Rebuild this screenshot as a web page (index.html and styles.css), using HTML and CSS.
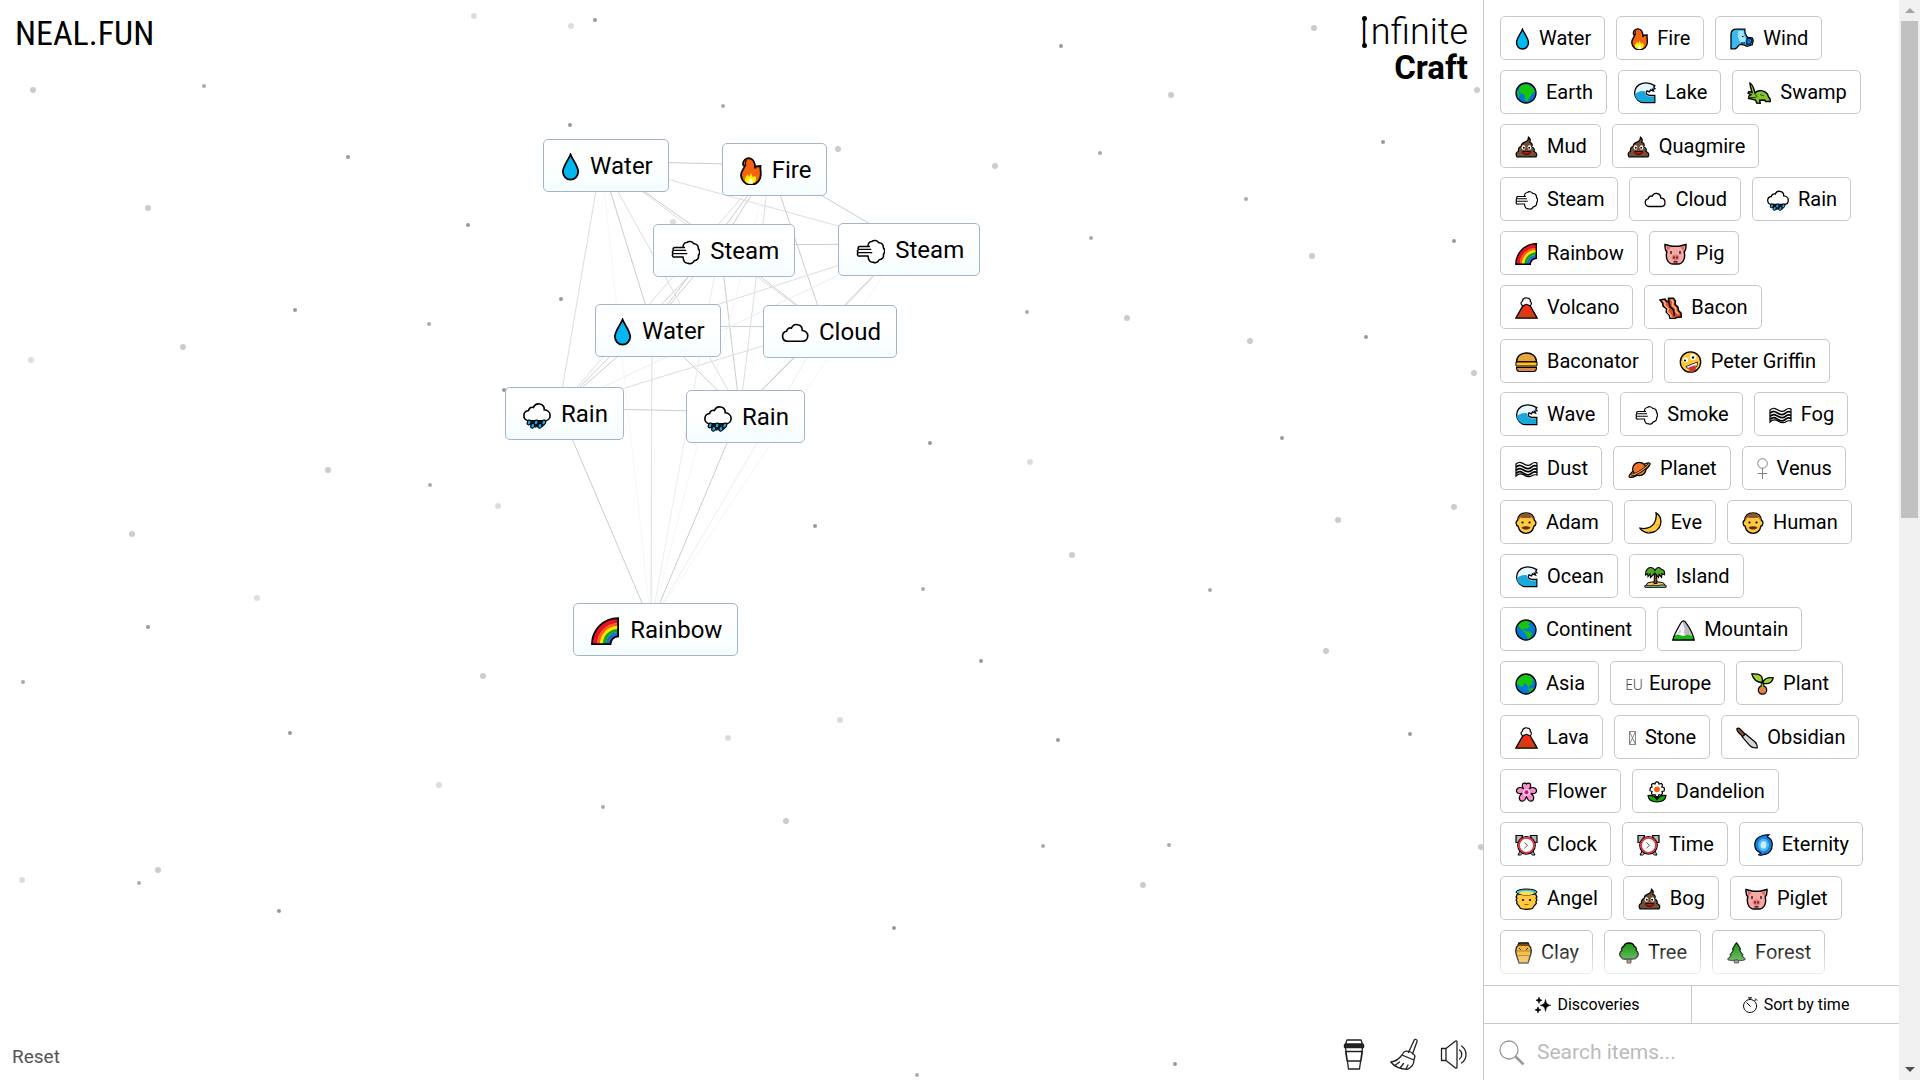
FILE: index.html
```html
<!DOCTYPE html>
<html lang="en">

<head>
    <meta charset="UTF-8">
    <meta name="viewport" content="width=device-width, initial-scale=1.0">
    <title>Infinite Craft</title>
    <link rel="stylesheet" href="styles.css">
</head>

<body>

    <!-- item icons, all 22 units high -->
    <svg class="sprite" aria-hidden="true">
        <defs>
            <g id="water">
                <path d="M7.500 1.200C6.500 4.500 1.500 10 1.500 14.800a6 6.200 0 0 0 12 0C13.500 10 8.500 4.500 7.500 1.200z" fill="#00b7f0" stroke="#000" stroke-width="1.4" />
            </g>
            <g id="fire">
                <path d="M7 .9c3.400.4 5 4 4.800 8l.9-1.600 3.400-.2c-.3 2 .4 4 .2 6.700a7.600 7.600 0 0 1-15.500.6C.6 11.200 3 9.500 3.900 6.800c-1 .4-1.600-.3-1.500-1.800.1-2 2-3.900 4.600-4.100z" fill="#f7630c" stroke="#000" stroke-width="1.4" />
                <path d="M5 2.500c-.9 1.300-.9 2.700-.6 4.200" fill="none" stroke="#000" />
                <path d="M4.500 19.800c-1.600-2.500.3-4.500 1.500-6l1.200 1.800 1.500-3 1.300 3.400 2-1.200c1.200 2 .8 4-.6 5.300-2 1.500-5.200 1.400-6.900-.3z" fill="#fff100" />
                <path d="M7 20.800c-.8-1.800.3-3.200 1.500-4 .8 1 2.200 2 1.500 4z" fill="#fff" />
            </g>
            <g id="wind">
                <path d="M1 20.800V6.500C1 3 3.500 1.200 6.500 1.200h8.300c-.3 2.400.2 4.500 2 7.300l1.200 1 4.200.3 1 2.500-.9 4.500-5.300 1.500-2.500-1.200-4-.7c-2 0-2.500 3.500-5.500 4.400z" fill="#3db8f0" stroke="#000" stroke-width="1.300" />
                <path d="M8 3h5.500l.5 4.500 2 3.500-2 4-4-1-2-5z" fill="#a6e3ff" />
                <path d="M17 10l4 .8 1 2-1.500 3.500h-4z" fill="#0078d7" stroke="#000" />
                <path d="M12 8.500h1.500M11 15h4" stroke="#000" />
            </g>
            <g id="earth">
                <circle cx="11" cy="11" r="10" fill="#0078d7" />
                <path d="M5 4.500l3-2 5 .2 5 3 1.500 4-2 1.500-3 4.500-2 3.300h-2l-.7-4-1-3-3-.5L4 9z" fill="#16c60c" />
                <path d="M2 9l2 4-1 2" fill="none" stroke="#16c60c" stroke-width="1.500" />
                <circle cx="11" cy="11" r="10" fill="none" stroke="#000" stroke-width="1.300" />
            </g>
            <g id="wave">
                <path d="M21.800 20.700H11A9.800 9.800 0 0 1 9.500 1.300c4-.8 8.500 0 12.300 2.300l-1 1.700 1.200 1.500-2.500.3 1 2-3-1.200-1 2-2.500-1c-2 3 .5 4.600 4 4.600h3.800z" fill="#e4f6ff" stroke="#000" stroke-width="1.300" />
                <path d="M2 12c2-2 5-3.500 9.700-3 .3 3.500 2.300 5.500 5.800 5.500h3.600v5.500H11c-5 0-9-3.500-9-8z" fill="#19a7dc" />
            </g>
            <g id="swamp">
                <path d="M3 1c2.500 1.500 4 5.500 5 10 2-2.500 6-3 9-1.500 3 1 4 3 4.500 5.500l1.700 2v2.500h-4.500l-1-1.500-5 .2.500 3-3.500-.2-1.200-3-4-1-3-.5.5-2.500 2-1.200L1 11l1-1.500 3 1C4.500 7 3 5 3 1z" fill="#86c52a" stroke="#000" stroke-width="1.400" />
                <path d="M1.500 15.500h8M13 12.500l4 1.500M8 11l2 4" stroke="#2c4a10" fill="none" />
            </g>
            <g id="poop">
                <path d="M13.500 1.200c2 1.500 2 3.500 1.200 4.800 2.500.8 3 3 2 5 2.300.5 3 2.800 2.300 4.500 2.700.7 3.500 3.500 2 5.300H2C.5 18.500 1 16 3.500 15.200 3 13 4 11 6.200 10.700 6 8 8 6.500 10.500 5.800c2-.7 3-2.300 3-4.600z" fill="#744d35" stroke="#000" stroke-width="1.200" />
                <ellipse cx="8.500" cy="11.500" rx="1.900" ry="2.300" fill="#fff" />
                <ellipse cx="14.500" cy="11.500" rx="1.900" ry="2.300" fill="#fff" />
                <circle cx="8.800" cy="11.800" r="1" />
                <circle cx="14.200" cy="11.800" r="1" />
                <path d="M7.500 15.500h8c0 4-8 4-8 0z" fill="#c50f1f" stroke="#000" stroke-width=".8" />
            </g>
            <g id="steam">
                <path d="M11 8H3a1.300 1.300 0 0 0-1 2.200 1.500 1.500 0 0 0-.2 2.600A1.500 1.500 0 0 0 3 15.500h6.500c0 3 1.500 5 4 4.800 2 1 4-.2 4.700-2 2.500 0 3.800-2.200 3.300-4 1.400-1.500 1.400-4 0-5.300.2-2.500-1.500-4.200-3.700-4-1.200-2-4-2.300-5.300-1-2.300 0-3.200 2-3 4" transform="translate(0 -.5)" fill="#fff" stroke="#000" stroke-width="1.200" stroke-linejoin="round" />
                <path d="M2.500 9.700h9.500M2.300 12.300h10.500" fill="none" stroke="#000" stroke-width="1.100" />
            </g>
            <g id="cloud">
                <path d="M5 17.500a4 4 0 0 1-.6-7.900c.3-2 2-3 3.800-2.400 1-2.200 3-3.200 5-2.700 2.400.5 3.600 2.400 3.500 4.500 2.500.2 4.300 2 4.300 4.400 0 2.500-1.800 4.100-4 4.100z" fill="#fff" stroke="#000" stroke-width="1.300" />
            </g>
            <g id="rain">
                <path d="M3 14h16l-1 3.500-2.500 3-1.500.5-1.500-1-3 1-2.500-1L4 17.500z" fill="#0a2a44" />
                <path d="M5 15.500c-3 0-4.300-1.900-4.300-4A4 4 0 0 1 4.400 7.500c.3-2 2-3 3.800-2.400 1-2.200 3-3.200 5-2.700 2.400.5 3.600 2.400 3.500 4.500 2.500.2 4.600 2 4.600 4.400 0 2.500-1.800 4.200-4.300 4.200z" fill="#fff" stroke="#000" stroke-width="1.300" />
                <path d="M5 16.200l-.5 1.300M10.500 16.200l-.5 1.300M16.500 16.200l-.5 1.300M7.800 18.800l-.5 1.200M13.500 18.800l-.5 1.200" stroke="#000" stroke-width="3.400" stroke-linecap="round" />
                <path d="M5 16.400l-.4 1M10.500 16.400l-.4 1M16.500 16.400l-.4 1M7.800 19l-.4 1M13.500 19l-.4 1" stroke="#1fa9e0" stroke-width="1.900" stroke-linecap="round" />
            </g>
            <g id="rainbow" fill="none">
                <path d="M3 21.300A18.300 18.300 0 0 1 21.300 3" stroke="#e81224" stroke-width="4" />
                <path d="M6 21.300A15.300 15.300 0 0 1 21.300 6" stroke="#f7630c" stroke-width="2.500" />
                <path d="M8.300 21.300a13 13 0 0 1 13-13" stroke="#fce100" stroke-width="2.500" />
                <path d="M10.600 21.300a10.700 10.700 0 0 1 10.700-10.700" stroke="#16a60c" stroke-width="2.500" />
                <path d="M13 21.300a8.300 8.300 0 0 1 8.300-8.300" stroke="#0078d7" stroke-width="2.500" />
                <path d="M14.800 21.300a6.500 6.500 0 0 1 6.500-6.500" stroke="#7a4fc4" stroke-width="2" />
                <path d="M.8 21.300A20.500 20.500 0 0 1 21.300.8v14.500a6 6 0 0 0-6 6z" stroke="#000" stroke-width="1.400" />
            </g>
            <g id="pig">
                <path d="M1 1.500l7 1.800h7L22 1.500c.3 3-.2 5.500-1.800 7.500 1.500 6-1 12-6.200 12H9C3.800 21 1.300 15 2.800 9 1.200 7 .7 4.500 1 1.500z" fill="#f4a9a4" stroke="#000" stroke-width="1.400" />
                <path d="M2.500 3l4 1.500L3.500 8zM20.500 3l-4 1.500L19.500 8z" fill="#e0626a" />
                <ellipse cx="11.500" cy="14.500" rx="3.800" ry="3" fill="#e9767c" />
                <path d="M7 8v3M16 8v3M10 13.500v2M13 13.500v2M9.500 18.800h4" stroke="#000" stroke-width="1.200" />
            </g>
            <g id="volcano">
                <path d="M8 8.500h7l7.200 12.700H.8z" fill="#c8411b" stroke="#000" stroke-width="1.300" />
                <path d="M8.500 8l1.500 7-1 3 2.500-2 1 4 1.500-5 2.500 3-2-10z" fill="#ff2a12" />
                <path d="M8 8.800C5.500 8 5.500 5 7.300 4.200 7.800 1 11 .2 12.800 1.200c2 .3 2.800 1.800 2.500 3.300C17 5.500 16.500 8.200 15 8.800l-3.500-1.500z" fill="#f4f4f4" stroke="#000" stroke-width="1.200" />
            </g>
            <g id="bacon">
                <path d="M1 3l5-1 1.500 2.500h2V1.200h5l2 3-.5 3 3 3 .5 3.300 2.500 2.500.3 4-4.800.5-2 1.200-4.500-.2-.8-3.500-3-3 .5-3.200L4 9 3.500 6z" fill="#d9532c" stroke="#000" stroke-width="1.500" />
                <path d="M4 3.500l2 2-.2 3L9 11.500l-.3 3.500 3 3 .3 2.500M12.500 2.500l1.500 2-.5 4 3 2.500.3 3.500 2.700 2.500" fill="none" stroke="#ffb48a" stroke-width="1.500" />
                <path d="M9.500 3.500l1.500 6 3.500 3.500 1 6" fill="none" stroke="#000" stroke-width="1.600" />
            </g>
            <g id="burger">
                <path d="M1.500 11C1.500 5 6 2 11.500 2s10 3 10 9z" fill="#e8a33a" stroke="#000" stroke-width="1.300" />
                <path d="M1 11h21v4H1z" fill="#f9c51c" stroke="#000" />
                <path d="M1.500 14.500h20v2h-20z" fill="#8e562e" />
                <path d="M1.500 16.500h20c0 3-1.500 4-3 4h-14c-1.500 0-3-1-3-4z" fill="#d58b4f" stroke="#000" stroke-width="1.100" />
            </g>
            <g id="zany">
                <circle cx="11.500" cy="11" r="10.200" fill="#ffc83d" stroke="#000" stroke-width="1.300" />
                <circle cx="6.500" cy="9" r="2.500" fill="#fff" />
                <circle cx="14" cy="6" r="3" fill="#fff" />
                <circle cx="6" cy="9.500" r="1.100" />
                <circle cx="14" cy="6.500" r="1.200" />
                <path d="M7 15.500l11.500-4.500c.3 4-1.500 6.800-5 7.300-3 .2-5-.3-6.500-2.800z" fill="#fff" stroke="#000" stroke-width=".8" />
                <path d="M9.500 16.500l7-2.500c1 4-.5 7-3 7s-3.500-2-4-4.500z" fill="#d13438" />
            </g>
            <g id="fog">
                <path d="M1 6c3.500-3 5.500-1.500 8 0s5 2.500 7.500 0 4-1.500 5.500-1v12c-2-.5-3.500-.5-5.500 1-2.500 1.500-5 .5-7.500-1s-5-2-8 1z" fill="#fff" stroke="#000" stroke-width="1.200" />
                <path d="M1 9.200c3.500-3 5.500-1.500 8 0s5 2.500 7.500 0S20.500 8 22 8M1 12.300c3.500-3 5.500-1.500 8 0s5 2.500 7.500 0 4-1.300 5.500-1M1 15.400c3.500-3 5.500-1.500 8 0s5 2.500 7.500 0 4-1.300 5.500-1" fill="none" stroke="#000" stroke-width="1.700" />
            </g>
            <g id="planet">
                <path d="M5 13c-3 3-4.500 5-3.800 6 2 1.500 9-2 13.500-5s8-7 7.300-8.500c-.8-1-4-.2-6.500 1" fill="#fbb03b" stroke="#000" stroke-width="1.200" />
                <circle cx="11.300" cy="11" r="6.700" fill="#f27227" stroke="#000" stroke-width="1.200" />
                <path d="M3 17c4 .2 14.500-6 17.500-10.500" fill="none" stroke="#000" stroke-width="2.600" />
                <path d="M3 17c4 .2 14.500-6 17.500-10.500" fill="none" stroke="#fbb03b" stroke-width="1.200" />
            </g>
            <g id="venus" fill="none" stroke="#777" stroke-width=".9">
                <circle cx="5.500" cy="5.500" r="4.800" />
                <path d="M5.500 10.300V21M.8 15.500h9.400" />
            </g>
            <g id="man">
                <path d="M2.500 8.500c-2 .5-2 5 .5 5.500 1 4.500 4 7.300 8 7.300s7-2.800 8-7.300c2.500-.5 2.500-5 .5-5.500C19 3.500 15.500.8 11 .8S3 3.500 2.500 8.500z" fill="#ffc83d" stroke="#000" stroke-width="1.300" />
                <path d="M3 8.500C3.500 4 6.500 1.400 11 1.400S18.500 4 19 8.500c-1-.5-1.700-1.500-2-3-3 .8-9 .8-12 0-.3 1.500-1 2.500-2 3z" fill="#8e562e" />
                <circle cx="7.500" cy="10.500" r="1.100" />
                <circle cx="14.500" cy="10.500" r="1.100" />
                <path d="M6.500 15.500c3-1.800 6-1.800 9 0-1.500 2.800-7.500 2.800-9 0z" fill="#5a3115" />
            </g>
            <g id="moon">
                <path d="M17 .9c7 4 6.500 14.500-1.500 18.800C9.500 22.500 3 20 .9 16.200c6 1 11-.2 14-4.500 2.500-4 2.700-7.500 2.100-10.800z" fill="#ffc83d" stroke="#000" stroke-width="1.300" />
                <path d="M8 19a1.500 1.500 0 1 0 3-1M17 13a1 1 0 1 0 2-1" fill="none" stroke="#d89b1f" />
            </g>
            <g id="island">
                <path d="M1 21l2.500-4c3-1.500 13-1.500 16 0L22 21z" fill="#f9c050" stroke="#000" />
                <path d="M.8 19.500c3-1 4 1 7 0s4 .8 7 0 4-.8 7.400 0v1.800H.8z" fill="#6ed3a0" stroke="#000" stroke-width=".8" />
                <path d="M10.500 7l2 .2.500 10.300h-3z" fill="#7a4a28" stroke="#000" />
                <path d="M11 4.500C9.500 1 5 .5 3 3.500 1.500 5 1.300 6.500 1.500 9l2.200-1.200L4 10.500 6 8l.5 3.500L11 7l3.500 4.500.7-3.200 2.300 3 .5-3.500 2.500 1c.5-3-1-5-3-5.500C15.500.5 12.500 1 11 4.500z" fill="#4fa52a" stroke="#000" stroke-width="1.100" />
            </g>
            <g id="mountain">
                <path d="M.8 21c.7-4 4.200-10.500 7.700-16.500 2-3.500 4-3.500 6 0C18 9.500 21.500 17 22.200 21z" fill="#f4f4f8" />
                <path d="M10.500 2.500l2-.5c4 4.500 6.500 9.500 7.500 14.500l-6 .5-2-3 .5-4z" fill="#b9b9c4" />
                <path d="M8 9l1 4-3 3z" fill="#c9c9d2" />
                <path d="M1.500 17l4-1.500 5.500 1.500 5-1.200 5.200 1.200 1 4.200H.8z" fill="#16b60c" />
                <path d="M.8 21c.7-4 4.200-10.500 7.700-16.500 2-3.500 4-3.500 6 0C18 9.500 21.500 17 22.200 21z" fill="none" stroke="#000" stroke-width="1.300" />
            </g>
            <g id="globe">
                <circle cx="11" cy="11" r="10" fill="#0078d7" />
                <path d="M2.500 6L7 2l6-.5 3 2-3 2 2.500 2L12 10l-3-1-1 2 3 1 4 .5 2 2-2 5-2 .5-2-5-5-5z" fill="#16c60c" />
                <circle cx="11" cy="11" r="10" fill="none" stroke="#000" stroke-width="1.300" />
            </g>
            <g id="asia">
                <circle cx="11" cy="11" r="10" fill="#0078d7" />
                <path d="M2 7l5-5h7l5 5-2 2 1 3-3-.5-1 3.500-2.500-3.500L9 10l-1 4-3-1-3-2zM13 16l4-1.500 1.500 2L15 19z" fill="#16c60c" />
                <circle cx="11" cy="11" r="10" fill="none" stroke="#000" stroke-width="1.300" />
            </g>
            <g id="plant">
                <path d="M11.500 16V9" stroke="#000" stroke-width="3.500" />
                <circle cx="11.500" cy="17" r="4.200" fill="#e8824a" stroke="#000" stroke-width="1.200" />
                <path d="M11.500 15.500V9" stroke="#86c52a" stroke-width="1.600" />
                <path d="M.8 1c5-.5 9 .5 10.200 3.500.5 2 .6 3.500.4 5-5 0-8.900-2.500-10.600-8.500zM12 10.300c0-4 4-6.300 10.300-5.500C21 9.500 17 11.500 12 10.300z" fill="#9fd531" stroke="#000" stroke-width="1.300" />
            </g>
            <g id="stone" fill="none" stroke="#777" stroke-width=".9">
                <path d="M.5 4.500h6v13h-6zM.5 4.500l6 13M6.500 4.500l-6 13" />
            </g>
            <g id="knife">
                <path d="M1 1.500c1.500-1 3 0 4 1.500l4.500 4.500L7 10 3 6C1.500 4.500.5 3 1 1.500z" fill="#8e562e" stroke="#000" stroke-width="1.200" />
                <path d="M9.500 7l9 7.500c2.500 2 2.800 4 2.700 6.300-3.700.3-6-.5-8-3l-7-8z" fill="#d5d5d5" stroke="#000" stroke-width="1.200" />
            </g>
            <g id="flower">
                <path d="M11.500 2.200c1-1.500 4-1.200 4.200 1 .2 1.500-.5 2.500-1 3.500 2-1.200 5-1.500 6.500.8.8 1.800 0 4-2.200 4.200-1.200.2-2.200 0-3.200-.3 2 1.500 3.700 4 2.400 6.600-1.200 1.800-3.700 1.800-4.900.2-.8-1-1.300-2-1.800-3.200-.5 1.200-1 2.200-1.800 3.200-1.200 1.600-3.700 1.600-4.900-.2-1.300-2.600.4-5.100 2.400-6.600-1 .3-2 .5-3.200.3C1.800 11.500 1 9.300 1.800 7.500c1.500-2.300 4.500-2 6.500-.8-.5-1-1.200-2-1-3.500.2-2.200 3.200-2.500 4.200-1z" transform="translate(0 .8)" fill="#f58fc6" stroke="#000" stroke-width="1.200" />
                <circle cx="11.500" cy="11.300" r="3.600" fill="#fbd0e8" />
                <circle cx="11.500" cy="11.300" r="2" fill="#e3008c" />
            </g>
            <g id="daisy">
                <path d="M10 14v6" stroke="#000" stroke-width="3" />
                <path d="M1 14.500c4-.5 7 .5 9 4 2-3.500 5-4.500 9-4-.5 4-4 6.500-9 6.500s-8.500-2.500-9-6.500z" fill="#16a60c" stroke="#000" stroke-width="1.200" />
                <path d="M8.500 1.500l1.500-.8 1.500.8.5 1.500 2.500-.5 1 1.500-.7 2 2.200.5.5 2-.5 1.500-2 .5.5 2-1.500 1.500-2-.3-1 1.800h-2l-1-1.800-2.500.3-1-1.500.5-2-2-.8V8l.5-1.500L5 6l-.5-2.500L6 2.500l2 .5z" fill="#fff" stroke="#000" stroke-width="1.200" />
                <circle cx="10" cy="8.300" r="2.900" fill="#f7630c" />
            </g>
            <g id="clock">
                <path d="M1 1.500h6.500l-1 3.500L3 8.500H1zM22 1.500h-6.500l1 3.500L20 8.500h2z" fill="#b4b4bc" stroke="#000" stroke-width="1.200" />
                <path d="M5 17l-2 4h2.500L8 19M18 17l2 4h-2.500L15 19" fill="#b4b4bc" stroke="#000" />
                <circle cx="11.500" cy="11.300" r="8.800" fill="#fff" stroke="#000" stroke-width="1.200" />
                <circle cx="11.500" cy="11.300" r="7.500" fill="#fff" stroke="#e0303a" stroke-width="1.800" />
                <path d="M9.500 8.500l3 2.800-3 2.800" fill="none" stroke="#444" stroke-width=".9" />
            </g>
            <g id="cyclone">
                <path d="M15 .8c-1 .7-1.500 1.500-1.500 2.300C17 4.500 18.300 7.500 18.200 11c0 5-3.200 8.800-7.200 9.300-2 1-4 .9-6 .5 1-.6 1.400-1.200 1.500-2C3 17.500.8 14.500.8 11c0-5 3.200-8 7.200-9.200 2-.8 4.500-1.200 7-1z" fill="#1180df" stroke="#000" stroke-width="1.200" />
                <ellipse cx="9.500" cy="11" rx="5.500" ry="6.500" fill="#4cb5f5" />
                <ellipse cx="9.500" cy="11" rx="3" ry="3.800" fill="#c9ecff" />
            </g>
            <g id="angel">
                <path d="M2.500 6c-1 1-.5 2-1.500 3l1 1-1 2 1 1.500-.3 2L4 18l1.500 2.500c3.500 1 8.500 1 12 0L19 18l2.300-2.500-.3-2 1-1.500-1-2 1-1c-1-1-.5-2-1.500-3z" fill="#ffc83d" stroke="#000" stroke-width="1.200" />
                <ellipse cx="11.500" cy="4" rx="10.500" ry="3" fill="#30c4dc" stroke="#000" />
                <ellipse cx="11.500" cy="5" rx="7.500" ry="2" fill="#ffdd55" />
                <circle cx="8" cy="12" r="1.100" />
                <circle cx="15" cy="12" r="1.100" />
                <path d="M9.500 16.500h4" stroke="#a35c00" stroke-width="1.100" />
            </g>
            <g id="clay">
                <path d="M4 1h9l1 2.500c3 2 2.500 6 1.500 9.500L13 21H4L1.500 13C.5 9.500 0 5.500 3 3.500z" fill="#f0ae1c" stroke="#000" stroke-width="1.400" />
                <path d="M3.500 3h10" stroke="#7a3e12" stroke-width="2" />
                <path d="M2 9h13M2.500 13.500h12" stroke="#a3620f" />
                <path d="M4 6l2 2M13 6l-2 2" stroke="#000" />
            </g>
            <g id="tree">
                <path d="M8 15h4v6H8z" fill="#8e562e" stroke="#000" />
                <path d="M10 1c2.500 0 4.500 1 5 3 2 1 2.700 3 2.200 4.500C19.500 10 20 13 18 15c-1.500 2-4 2.300-5.500 2h-5C5 17.500 3 17 2 15 0 13 .5 10 2.800 8.500 2.300 7 3 5 5 4c.5-2 2.500-3 5-3z" fill="#16960c" stroke="#000" stroke-width="1.400" />
            </g>
            <g id="forest">
                <path d="M7.500 17h4v4h-4z" fill="#8e562e" stroke="#000" />
                <path d="M9.500.8c2 2 3 4 4 6.500l-1 .5c1 2 2 3.500 3.500 5l-1 .8c1 1.200 2 2.400 3.200 3.600-1.500 2-4 .5-5.500 1.500-1.500 0-2-1-3.200-1s-2 1-3.500 1c-1.500-1-4 .5-5.200-1.500C2 16 3 14.800 4 13.600l-1-.8C4.500 11.300 5.500 9.800 6.500 7.800l-1-.5c1-2.500 2-4.500 4-6.500z" fill="#16960c" stroke="#000" stroke-width="1.200" />
            </g>
        </defs>
    </svg>

    <div class="container">
        <main class="workspace">
            <svg class="background" aria-hidden="true">
                <g class="dots-small">
                    <circle cx="570" cy="125" r="2" /><circle cx="348" cy="157" r="2" /><circle cx="468" cy="225" r="2" />
                    <circle cx="561" cy="299" r="2" /><circle cx="295" cy="310" r="2" /><circle cx="504" cy="390" r="2" />
                    <circle cx="1061" cy="46" r="2" /><circle cx="1383" cy="142" r="2" /><circle cx="1454" cy="241" r="2" />
                    <circle cx="1366" cy="337" r="2" /><circle cx="930" cy="443" r="2" /><circle cx="815" cy="526" r="2" />
                    <circle cx="148" cy="627" r="2" /><circle cx="290" cy="733" r="2" /><circle cx="279" cy="911" r="2" />
                    <circle cx="981" cy="661" r="2" /><circle cx="1058" cy="740" r="2" /><circle cx="1410" cy="734" r="2" />
                    <circle cx="894" cy="928" r="2" /><circle cx="1175" cy="1064" r="2" /><circle cx="595" cy="20" r="2" />
                    <circle cx="1282" cy="438" r="2" />
                </g>
                <g class="dots-medium">
                    <circle cx="204" cy="86" r="2" /><circle cx="723" cy="106" r="2" /><circle cx="429" cy="324" r="2" />
                    <circle cx="430" cy="485" r="2" /><circle cx="1100" cy="153" r="2" /><circle cx="1246" cy="199" r="2" />
                    <circle cx="1091" cy="238" r="2" /><circle cx="1027" cy="312" r="2" /><circle cx="23" cy="682" r="2" />
                    <circle cx="603" cy="807" r="2" /><circle cx="139" cy="883" r="2" /><circle cx="923" cy="589" r="2" />
                    <circle cx="1210" cy="590" r="2" /><circle cx="1043" cy="846" r="2" /><circle cx="1169" cy="845" r="2" />
                    <circle cx="917" cy="1075" r="2" />
                </g>
                <g class="dots-large">
                    <circle cx="33" cy="90" r="3" /><circle cx="148" cy="208" r="3" /><circle cx="183" cy="347" r="3" />
                    <circle cx="328" cy="470" r="3" /><circle cx="132" cy="534" r="3" /><circle cx="1314" cy="28" r="3" />
                    <circle cx="1171" cy="95" r="3" /><circle cx="838" cy="149" r="3" /><circle cx="995" cy="166" r="3" />
                    <circle cx="1477" cy="90" r="3" /><circle cx="1312" cy="256" r="3" /><circle cx="1127" cy="318" r="3" />
                    <circle cx="1250" cy="341" r="3" /><circle cx="1474" cy="373" r="3" /><circle cx="1454" cy="507" r="3" />
                    <circle cx="1338" cy="520" r="3" /><circle cx="483" cy="676" r="3" /><circle cx="158" cy="870" r="3" />
                    <circle cx="1072" cy="555" r="3" /><circle cx="1326" cy="651" r="3" /><circle cx="786" cy="821" r="3" />
                    <circle cx="1143" cy="885" r="3" /><circle cx="1481" cy="847" r="3" />
                </g>
                <g class="dots-faint">
                    <circle cx="474" cy="16" r="3" /><circle cx="571" cy="26" r="3" /><circle cx="673" cy="222" r="3" />
                    <circle cx="31" cy="360" r="3" /><circle cx="498" cy="506" r="3" /><circle cx="1030" cy="462" r="3" />
                    <circle cx="257" cy="598" r="3" /><circle cx="728" cy="738" r="3" /><circle cx="439" cy="785" r="3" />
                    <circle cx="22" cy="880" r="3" /><circle cx="840" cy="720" r="3" />
                </g>
                <path class="line-near" d="M601 161L770 165M601 161L720 245M770 165L720 245M770 165L904 244M720 245L904 244M720 245L652 326M720 245L825 327M652 326L825 327M652 326L559 408M652 326L740 412M825 327L740 412M559 408L740 412M904 244L825 327M770 165L652 326M601 161L652 326M770 165L825 327M720 245L740 412M720 245L559 408M740 412L651 624M559 408L651 624" />
                <path class="line-mid" d="M601 161L825 327M601 161L559 408M770 165L559 408M770 165L740 412M652 326L651 624M904 244L652 326M904 244L740 412M825 327L559 408M601 161L740 412M601 161L904 244" />
                <path class="line-far" d="M825 327L651 624M720 245L651 624M904 244L559 408" />
                <path class="line-faint" d="M904 244L651 624M601 161L651 624M770 165L651 624" />
            </svg>

            <header class="top-bar">
                <a class="site-logo" href="#">NEAL.FUN</a>
                <h1 class="game-logo">
                    <span class="infinite"><span class="stick">I</span>nfinite</span>
                    <span class="craft">Craft</span>
                </h1>
            </header>

            <button type="button" class="instance water-1"><svg class="icon" viewBox="0 0 15 22"><use href="#water" /></svg>Water</button>
            <button type="button" class="instance fire-1"><svg class="icon" viewBox="0 0 17 22"><use href="#fire" /></svg>Fire</button>
            <button type="button" class="instance steam-1"><svg class="icon" viewBox="0 0 23 22"><use href="#steam" /></svg>Steam</button>
            <button type="button" class="instance steam-2"><svg class="icon" viewBox="0 0 23 22"><use href="#steam" /></svg>Steam</button>
            <button type="button" class="instance water-2"><svg class="icon" viewBox="0 0 15 22"><use href="#water" /></svg>Water</button>
            <button type="button" class="instance cloud-1"><svg class="icon" viewBox="0 0 22 22"><use href="#cloud" /></svg>Cloud</button>
            <button type="button" class="instance rain-1"><svg class="icon" viewBox="0 0 22 22"><use href="#rain" /></svg>Rain</button>
            <button type="button" class="instance rain-2"><svg class="icon" viewBox="0 0 22 22"><use href="#rain" /></svg>Rain</button>
            <button type="button" class="instance rainbow-1"><svg class="icon" viewBox="0 0 23 22"><use href="#rainbow" /></svg>Rainbow</button>

            <footer class="bottom-bar">
                <button type="button" class="reset">Reset</button>
                <div class="tools">
                    <button type="button" class="tool" aria-label="Buy me a coffee">
                        <svg viewBox="0 0 28 32">
                            <path d="M7 2h14l1.500 4h-17zM4.500 6.500h19v3h-19zM5.500 9.500h17l-3 21.500h-11zM5.500 13.500L7 23h14l1.500-9.500z" />
                            <path d="M5 8h18" stroke-width="2.500" />
                        </svg>
                    </button>
                    <button type="button" class="tool" aria-label="Clear the board">
                        <svg viewBox="0 0 28 32">
                            <path d="M18.500 14.500l5.500-12c1-2 3.500-1 3 1l-4.500 12.500M14 14c3-2 9 0 11 4l-1 4-12-5zM12 17C9 21 5.500 23.500.8 24c3 4 8.500 7 16.700 7.300C22 29 24 26 24 22M13 17.500l11 4.500M5.500 27l4-3M10.500 29.500l3-4M16 31l2-4" />
                        </svg>
                    </button>
                    <button type="button" class="tool" aria-label="Toggle sound">
                        <svg viewBox="0 0 28 32">
                            <path d="M6 10.500l9.500-7.500c1-.5 1.500 0 1.500 1v25c0 1-.5 1.500-1.500 1L6 22.500M1.500 10.500H6v12H1.500zM19.500 12c3 2 3 7 0 9M21.500 8c6 4 6 13 0 17" />
                        </svg>
                    </button>
                </div>
            </footer>
        </main>

        <aside class="sidebar">
            <div class="items">
                <button type="button" class="item"><svg class="icon" viewBox="0 0 15 22"><use href="#water" /></svg>Water</button>
                <button type="button" class="item"><svg class="icon" viewBox="0 0 17 22"><use href="#fire" /></svg>Fire</button>
                <button type="button" class="item"><svg class="icon" viewBox="0 0 24 22"><use href="#wind" /></svg>Wind</button>
                <button type="button" class="item"><svg class="icon" viewBox="0 0 22 22"><use href="#earth" /></svg>Earth</button>
                <button type="button" class="item"><svg class="icon" viewBox="0 0 23 22"><use href="#wave" /></svg>Lake</button>
                <button type="button" class="item"><svg class="icon" viewBox="0 0 24 22"><use href="#swamp" /></svg>Swamp</button>
                <button type="button" class="item"><svg class="icon" viewBox="0 0 23 22"><use href="#poop" /></svg>Mud</button>
                <button type="button" class="item"><svg class="icon" viewBox="0 0 23 22"><use href="#poop" /></svg>Quagmire</button>
                <button type="button" class="item"><svg class="icon" viewBox="0 0 23 22"><use href="#steam" /></svg>Steam</button>
                <button type="button" class="item"><svg class="icon" viewBox="0 0 22 22"><use href="#cloud" /></svg>Cloud</button>
                <button type="button" class="item"><svg class="icon" viewBox="0 0 22 22"><use href="#rain" /></svg>Rain</button>
                <button type="button" class="item"><svg class="icon" viewBox="0 0 23 22"><use href="#rainbow" /></svg>Rainbow</button>
                <button type="button" class="item"><svg class="icon" viewBox="0 0 23 22"><use href="#pig" /></svg>Pig</button>
                <button type="button" class="item"><svg class="icon" viewBox="0 0 23 22"><use href="#volcano" /></svg>Volcano</button>
                <button type="button" class="item"><svg class="icon" viewBox="0 0 23 22"><use href="#bacon" /></svg>Bacon</button>
                <button type="button" class="item"><svg class="icon" viewBox="0 0 23 22"><use href="#burger" /></svg>Baconator</button>
                <button type="button" class="item"><svg class="icon" viewBox="0 0 23 22"><use href="#zany" /></svg>Peter Griffin</button>
                <button type="button" class="item"><svg class="icon" viewBox="0 0 23 22"><use href="#wave" /></svg>Wave</button>
                <button type="button" class="item"><svg class="icon" viewBox="0 0 23 22"><use href="#steam" /></svg>Smoke</button>
                <button type="button" class="item"><svg class="icon" viewBox="0 0 23 22"><use href="#fog" /></svg>Fog</button>
                <button type="button" class="item"><svg class="icon" viewBox="0 0 23 22"><use href="#fog" /></svg>Dust</button>
                <button type="button" class="item"><svg class="icon" viewBox="0 0 23 22"><use href="#planet" /></svg>Planet</button>
                <button type="button" class="item"><svg class="icon" viewBox="0 0 11 22"><use href="#venus" /></svg>Venus</button>
                <button type="button" class="item"><svg class="icon" viewBox="0 0 22 22"><use href="#man" /></svg>Adam</button>
                <button type="button" class="item"><svg class="icon" viewBox="0 0 23 22"><use href="#moon" /></svg>Eve</button>
                <button type="button" class="item"><svg class="icon" viewBox="0 0 22 22"><use href="#man" /></svg>Human</button>
                <button type="button" class="item"><svg class="icon" viewBox="0 0 23 22"><use href="#wave" /></svg>Ocean</button>
                <button type="button" class="item"><svg class="icon" viewBox="0 0 23 22"><use href="#island" /></svg>Island</button>
                <button type="button" class="item"><svg class="icon" viewBox="0 0 22 22"><use href="#globe" /></svg>Continent</button>
                <button type="button" class="item"><svg class="icon" viewBox="0 0 23 22"><use href="#mountain" /></svg>Mountain</button>
                <button type="button" class="item"><svg class="icon" viewBox="0 0 22 22"><use href="#asia" /></svg>Asia</button>
                <button type="button" class="item"><span class="flag">EU</span>Europe</button>
                <button type="button" class="item"><svg class="icon" viewBox="0 0 23 22"><use href="#plant" /></svg>Plant</button>
                <button type="button" class="item"><svg class="icon" viewBox="0 0 23 22"><use href="#volcano" /></svg>Lava</button>
                <button type="button" class="item"><svg class="icon" viewBox="0 0 7 22"><use href="#stone" /></svg>Stone</button>
                <button type="button" class="item"><svg class="icon" viewBox="0 0 22 22"><use href="#knife" /></svg>Obsidian</button>
                <button type="button" class="item"><svg class="icon" viewBox="0 0 23 22"><use href="#flower" /></svg>Flower</button>
                <button type="button" class="item"><svg class="icon" viewBox="0 0 20 22"><use href="#daisy" /></svg>Dandelion</button>
                <button type="button" class="item"><svg class="icon" viewBox="0 0 23 22"><use href="#clock" /></svg>Clock</button>
                <button type="button" class="item"><svg class="icon" viewBox="0 0 23 22"><use href="#clock" /></svg>Time</button>
                <button type="button" class="item"><svg class="icon" viewBox="0 0 19 22"><use href="#cyclone" /></svg>Eternity</button>
                <button type="button" class="item"><svg class="icon" viewBox="0 0 23 22"><use href="#angel" /></svg>Angel</button>
                <button type="button" class="item"><svg class="icon" viewBox="0 0 23 22"><use href="#poop" /></svg>Bog</button>
                <button type="button" class="item"><svg class="icon" viewBox="0 0 23 22"><use href="#pig" /></svg>Piglet</button>
                <button type="button" class="item"><svg class="icon" viewBox="0 0 17 22"><use href="#clay" /></svg>Clay</button>
                <button type="button" class="item"><svg class="icon" viewBox="0 0 20 22"><use href="#tree" /></svg>Tree</button>
                <button type="button" class="item"><svg class="icon" viewBox="0 0 19 22"><use href="#forest" /></svg>Forest</button>
            </div>

            <div class="sorts">
                <button type="button" class="sort">
                    <svg viewBox="0 0 16 16">
                        <path d="M10.500 2.500c.7 4 1.500 5 5.300 5.800-3.800.8-4.600 2-5.300 6-.7-4-1.500-5.200-5.300-6 3.800-.8 4.600-1.800 5.300-5.800zM4 0c.4 2 1 2.700 3 3.200-2 .5-2.600 1.200-3 3.200-.4-2-1-2.700-3-3.200C3 2.700 3.600 2 4 0zM3 9.800c.4 2 1 2.600 3 3.100-2 .5-2.600 1.100-3 3.100-.4-2-1-2.600-3-3.100 2-.5 2.600-1.100 3-3.100z" stroke="#000" stroke-width=".6" />
                    </svg>
                    Discoveries
                </button>
                <button type="button" class="sort">
                    <svg viewBox="0 0 16 16">
                        <path d="M8 2.500a6.500 6.500 0 1 0 .1 0zM8 2.500V.8M6 .8h4M12.500 4l1.500-1.500M13 1.500L15 3.500M4.500 5.500L8.500 9.500" fill="none" stroke="#000" />
                    </svg>
                    Sort by time
                </button>
            </div>

            <div class="search">
                <label for="search-input" aria-label="Search items">
                    <svg class="search-icon" viewBox="0 0 26 26">
                        <circle cx="10" cy="10" r="9" />
                        <path d="M16.500 16.500l8 8" stroke-width="2.500" />
                    </svg>
                </label>
                <input type="text" id="search-input" placeholder="Search items...">
            </div>
        </aside>

        <div class="scrollbar" aria-hidden="true">
            <span class="arrow up"></span>
            <span class="thumb"></span>
            <span class="arrow down"></span>
        </div>
    </div>

</body>

</html>
```

FILE: styles.css
```css
* {
    box-sizing: border-box;
}

body {
    margin: 0;
    background: #fff;
    color: #000;
    font-family: Roboto, "Liberation Sans", sans-serif;
}

button {
    font-family: inherit;
    color: inherit;
    background: none;
    border: none;
    padding: 0;
    cursor: pointer;
}

.sprite {
    display: none;
}

.container {
    display: flex;
    height: 100vh;
    overflow: hidden;
}

/* workspace */

.workspace {
    position: relative;
    flex: 1;
    min-width: 0;
    display: flex;
    flex-direction: column;
    justify-content: space-between;
}

.background {
    position: absolute;
    inset: 0;
    width: 100%;
    height: 100%;
}

.background path {
    fill: none;
    stroke-width: 1;
}

.dots-small {
    fill: #999;
}

.dots-medium {
    fill: #aaa;
}

.dots-large {
    fill: #ccc;
}

.dots-faint {
    fill: #ddd;
}

.line-near {
    stroke: #ccc;
}

.line-mid {
    stroke: #ddd;
}

.line-far {
    stroke: #ececec;
}

.line-faint {
    stroke: #f6f6f6;
}

.top-bar {
    position: relative;
    display: flex;
    justify-content: space-between;
    align-items: flex-start;
    padding: 12px 15px;
}

.site-logo {
    font-family: "Roboto Condensed", "Liberation Sans Narrow", Roboto, sans-serif;
    font-size: 34px;
    line-height: 42px;
    color: #000;
    text-decoration: none;
}

.game-logo {
    display: flex;
    flex-direction: column;
    align-items: flex-end;
    margin: 0;
}

.infinite {
    font-size: 36px;
    line-height: 40px;
    font-weight: 300;
}

.craft {
    font-size: 33px;
    line-height: 32px;
    font-weight: 700;
}

.stick {
    position: relative;
    margin-right: 2px;
}

.stick::before,
.stick::after {
    content: "";
    position: absolute;
    left: 3px;
    width: 5px;
    height: 5px;
    border-radius: 50%;
    background: #000;
}

.stick::before {
    top: 5px;
}

.stick::after {
    bottom: 5px;
}

.icon {
    display: block;
    height: 22px;
    margin-top: 2px;
}

/* items dropped on the board */

.instance {
    position: absolute;
    display: flex;
    align-items: center;
    gap: 10px;
    height: 53px;
    padding: 0 15px 0 17px;
    border: 1px solid #a4b4cc;
    border-radius: 5px;
    background: linear-gradient(#fff 40%, #f5fdff);
    font-size: 24px;
    line-height: 28px;
}

.instance .icon {
    height: 28px;
}

.water-1 {
    left: 543px;
    top: 139px;
}

.fire-1 {
    left: 722px;
    top: 143px;
}

.steam-1 {
    left: 653px;
    top: 224px;
}

.steam-2 {
    left: 838px;
    top: 223px;
}

.water-2 {
    left: 595px;
    top: 304px;
}

.cloud-1 {
    left: 763px;
    top: 305px;
}

.rain-1 {
    left: 505px;
    top: 387px;
}

.rain-2 {
    left: 686px;
    top: 390px;
}

.rainbow-1 {
    left: 573px;
    top: 603px;
}

.bottom-bar {
    position: relative;
    display: flex;
    justify-content: space-between;
    align-items: flex-end;
    padding: 0 15px 10px 12px;
}

.reset {
    font-size: 19px;
    line-height: 26px;
    color: #555;
}

.tools {
    display: flex;
    gap: 22px;
}

.tool svg {
    display: block;
    width: 28px;
    height: 32px;
    fill: none;
    stroke: #222;
    stroke-width: 1.3;
    stroke-linejoin: round;
    stroke-linecap: round;
}

/* sidebar */

.sidebar {
    display: flex;
    flex-direction: column;
    width: 416px;
    border-left: 1px solid #c8c8c8;
}

.items {
    position: relative;
    flex: 1;
    min-height: 0;
    display: flex;
    flex-wrap: wrap;
    align-content: space-between;
    column-gap: 11px;
    padding: 16px 24px 11px 16px;
}

/* fades out the last row */
.items::after {
    content: "";
    position: absolute;
    left: 0;
    right: 0;
    bottom: 0;
    height: 42px;
    background: linear-gradient(rgba(255, 255, 255, 0), rgba(255, 255, 255, 0.9));
    pointer-events: none;
}

.item {
    display: flex;
    align-items: center;
    gap: 9px;
    height: 44px;
    padding: 0 13px 0 14px;
    border: 1px solid #c8c8c8;
    border-radius: 5px;
    background: #fff;
    font-size: 20px;
    line-height: 24px;
}

.flag {
    font-family: "Noto Sans", sans-serif;
    font-size: 14px;
    font-weight: 300;
    color: #444;
    margin-right: -3px;
    padding-top: 3px;
}

.sorts {
    display: flex;
    height: 39px;
    border-top: 1px solid #c8c8c8;
    border-bottom: 1px solid #c8c8c8;
}

.sort {
    flex: 1;
    display: flex;
    align-items: center;
    justify-content: center;
    gap: 6px;
    font-size: 16px;
}

.sort + .sort {
    border-left: 1px solid #c8c8c8;
}

.sort svg {
    width: 16px;
    height: 16px;
}

.search {
    display: flex;
    align-items: center;
    gap: 12px;
    height: 56px;
    padding: 0 15px;
}

.search-icon {
    display: block;
    width: 26px;
    height: 26px;
    margin-top: 2px;
    fill: none;
    stroke: #999;
    stroke-width: 1.3;
}

.search input {
    flex: 1;
    min-width: 0;
    padding: 0;
    border: none;
    outline: none;
    font-family: inherit;
    font-size: 21px;
}

.search input::placeholder {
    color: #bbb;
}

/* page scrollbar */

.scrollbar {
    display: flex;
    flex-direction: column;
    align-items: center;
    width: 21px;
    background: #f0f0f0;
}

.arrow {
    margin: 8px 0;
    border: 5px solid transparent;
}

.up {
    border-top: none;
    border-bottom-color: #a3a3a3;
}

.down {
    border-bottom: none;
    border-top-color: #505050;
    margin-top: auto;
}

.thumb {
    width: 17px;
    height: 46%;
    background: #c1c1c1;
}
```
